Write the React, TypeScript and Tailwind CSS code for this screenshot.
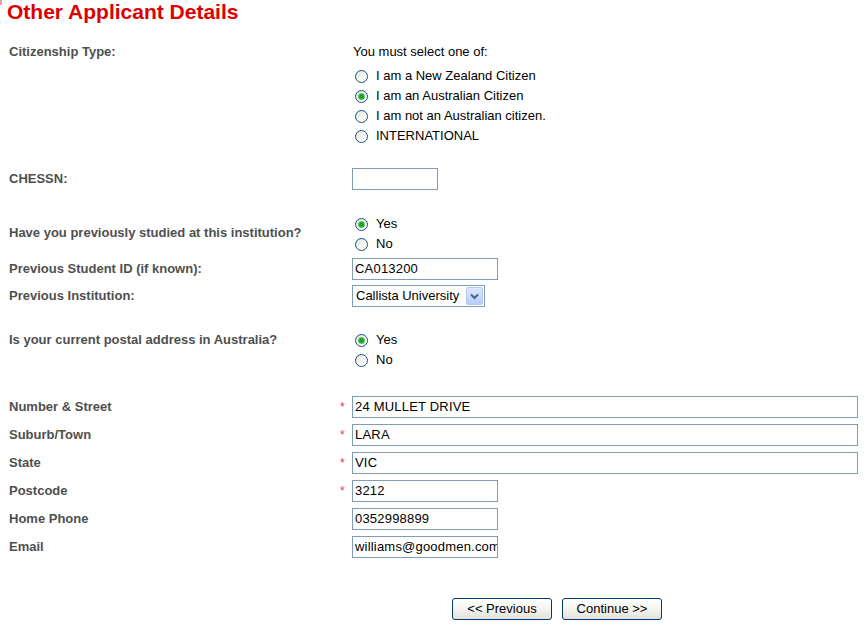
import { ReactNode } from 'react';

const font = { fontFamily: '"Liberation Sans", Arial, sans-serif' };

function Radio({ checked }: { checked?: boolean }) {
  return (
    <span className="relative inline-flex h-[13px] w-[13px] shrink-0 items-center justify-center rounded-full border border-[#1c5180] bg-gradient-to-br from-[#dcdcd7] via-[#f6f6f4] to-white">
      {checked && <span className="h-[5px] w-[5px] rounded-full bg-[#21a121] shadow-[0_0_0_1px_#61c861]" />}
    </span>
  );
}

function RadioOption({ label, checked }: { label: string; checked?: boolean }) {
  return (
    <div className="flex h-5 items-center gap-[8px] pl-[3px] text-[13px] text-black">
      <Radio checked={checked} />
      <span>{label}</span>
    </div>
  );
}

function Label({ children }: { children: ReactNode }) {
  return <div className="text-[13px] font-bold text-[#4f4f4f]">{children}</div>;
}

function Row({
  label,
  required,
  children,
  className = 'items-center',
}: {
  label: ReactNode;
  required?: boolean;
  children: ReactNode;
  className?: string;
}) {
  return (
    <div className={`grid grid-cols-[331px_12px_1fr] ${className}`}>
      <Label>{label}</Label>
      <div className="text-[12px] leading-none text-[#e03c4f]">{required ? '*' : ''}</div>
      <div>{children}</div>
    </div>
  );
}

function TextInput({ value = '', width }: { value?: string; width: string }) {
  return (
    <div
      className={`flex h-[22px] items-center overflow-hidden whitespace-nowrap border border-[#7f9db9] bg-white pl-[2px] text-[13px] tracking-[0.2px] text-black ${width}`}
    >
      {value}
    </div>
  );
}

function Button({ children }: { children: ReactNode }) {
  return (
    <button className="flex h-[22px] w-full items-center justify-center rounded-[3px] border border-[#003c74] bg-gradient-to-b from-white via-[#f4f4f0] to-[#e3e2d8] text-[13px] text-black">
      {children}
    </button>
  );
}

export default function App() {
  return (
    <div className="relative min-h-[626px] w-[867px] bg-white" style={font}>
      <div className="absolute left-0 top-0 h-[5px] w-[2px] bg-[#e0a0a0]" />
      <h1 className="h-[24px] pl-[7px] pt-[1px] text-[21px] font-bold leading-[22px] text-[#dd0000]">
        Other Applicant Details
      </h1>

      <div className="flex flex-col pl-[9px] pr-[9px]">
        <div className="mt-[18px]">
          <Row label={<span className="flex h-5 items-center">Citizenship Type:</span>} className="items-start">
            <div className="flex flex-col">
              <div className="mb-1 flex h-5 items-center pl-px text-[13px] text-black">You must select one of:</div>
              <RadioOption label="I am a New Zealand Citizen" />
              <RadioOption label="I am an Australian Citizen" checked />
              <RadioOption label="I am not an Australian citizen." />
              <RadioOption label="INTERNATIONAL" />
            </div>
          </Row>
        </div>

        <div className="mt-[22px]">
          <Row label="CHESSN:">
            <TextInput width="w-[86px]" />
          </Row>
        </div>

        <div className="mt-[24px]">
          <Row label={<span className="relative top-[-1px]">Have you previously studied at this institution?</span>}>
            <div className="flex flex-col">
              <RadioOption label="Yes" checked />
              <RadioOption label="No" />
            </div>
          </Row>
        </div>

        <div className="mt-1">
          <Row label="Previous Student ID (if known):">
            <TextInput value="CA013200" width="w-[146px]" />
          </Row>
        </div>

        <div className="mt-[5px]">
          <Row label="Previous Institution:">
            <div className="flex h-[22px] w-[133px] items-center border border-[#7f9db9] bg-white pl-[3px] pr-[1px] text-[13px] text-black">
              <span className="flex-1 whitespace-nowrap">Callista University</span>
              <span className="flex h-[18px] w-[17px] items-center justify-center rounded-[2px] border border-[#b4c8f6] bg-gradient-to-b from-[#dde8fd] to-[#b6cdfb]">
                <svg width="9" height="7" viewBox="0 0 9 7">
                  <path d="M1 1.5 L4.5 5 L8 1.5" fill="none" stroke="#4d6185" strokeWidth="2" />
                </svg>
              </span>
            </div>
          </Row>
        </div>

        <div className="mt-[23px]">
          <Row label={<span className="flex h-5 items-center">Is your current postal address in Australia?</span>} className="items-start">
            <div className="flex flex-col">
              <RadioOption label="Yes" checked />
              <RadioOption label="No" />
            </div>
          </Row>
        </div>

        <div className="mt-[26px] flex flex-col gap-[6px]">
          <Row label="Number &amp; Street" required>
            <TextInput value="24 MULLET DRIVE" width="w-[506px]" />
          </Row>
          <Row label="Suburb/Town" required>
            <TextInput value="LARA" width="w-[506px]" />
          </Row>
          <Row label="State" required>
            <TextInput value="VIC" width="w-[506px]" />
          </Row>
          <Row label="Postcode" required>
            <TextInput value="3212" width="w-[146px]" />
          </Row>
          <Row label="Home Phone">
            <TextInput value="0352998899" width="w-[146px]" />
          </Row>
          <Row label="Email">
            <TextInput value="williams@goodmen.com" width="w-[146px]" />
          </Row>
        </div>

        <div className="mt-[40px] flex gap-[10px] pl-[443px]">
          <div className="w-[100px]">
            <Button>&lt;&lt; Previous</Button>
          </div>
          <div className="w-[100px]">
            <Button>Continue &gt;&gt;</Button>
          </div>
        </div>
      </div>
    </div>
  );
}
